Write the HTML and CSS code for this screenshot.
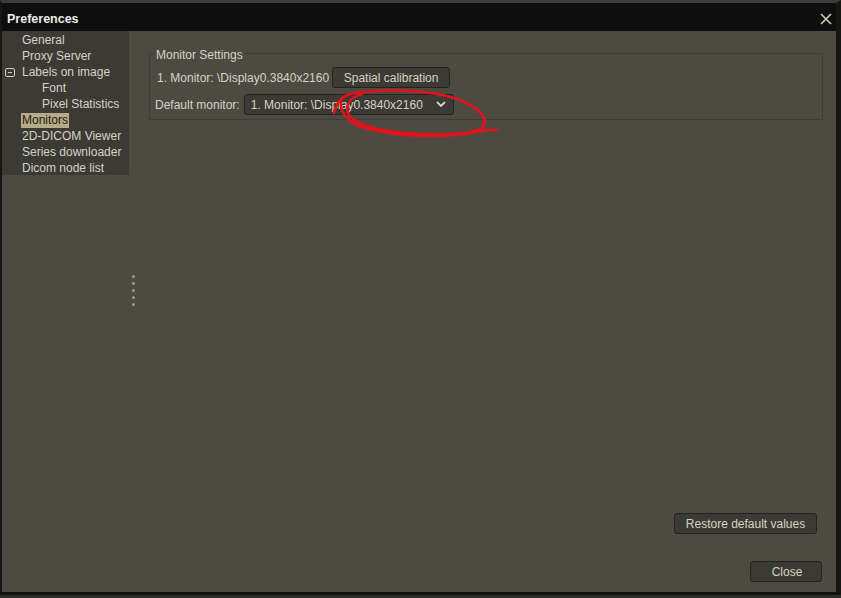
FILE: index.html
```html
<!DOCTYPE html>
<html lang="en">
<head>
    <meta charset="UTF-8">
    <title>Preferences</title>
    <link rel="stylesheet" href="styles.css">
</head>
<body>

    <div class="window">
        <div class="titlebar">
            <span class="title">Preferences</span>
            <svg class="close-x" width="12" height="12" viewBox="0 0 12 12">
                <path d="M1 1 L11 11 M11 1 L1 11" stroke="#cfcbbf" stroke-width="1.6" fill="none"/>
            </svg>
        </div>

        <div class="content">
            <div class="tree">
                <div class="item">General</div>
                <div class="item">Proxy Server</div>
                <div class="item"><span class="toggle"></span>Labels on image</div>
                <div class="item child">Font</div>
                <div class="item child">Pixel Statistics</div>
                <div class="item"><span class="selected">Monitors</span></div>
                <div class="item">2D-DICOM Viewer</div>
                <div class="item">Series downloader</div>
                <div class="item">Dicom node list</div>
            </div>

            <div class="splitter">
                <span></span><span></span><span></span><span></span><span></span>
            </div>

            <div class="main">
                <fieldset class="group">
                    <legend>Monitor Settings</legend>
                    <div class="row first">
                        <span>1. Monitor: \Display0.3840x2160</span>
                        <button class="btn calib">Spatial calibration</button>
                    </div>
                    <div class="row">
                        <span>Default monitor:</span>
                        <div class="combo">
                            <span>1. Monitor: \Display0.3840x2160</span>
                            <svg width="10" height="7" viewBox="0 0 10 7">
                                <path d="M1 1 L5 5 L9 1" stroke="#d8d4c6" stroke-width="1.8" fill="none"/>
                            </svg>
                        </div>
                    </div>
                </fieldset>

                <div class="restore-row">
                    <button class="btn">Restore default values</button>
                </div>
            </div>
        </div>

        <div class="footer">
            <button class="btn close-btn">Close</button>
        </div>

        <!-- red marker scribble -->
        <svg class="scribble" width="841" height="598" viewBox="0 0 841 598">
            <path d="M334 113 C336 104 340 97 350 94 C380 88 430 89 460 100 C480 108 490 120 482 128 C470 136 430 136 395 132 C370 129 352 122 348 113 C345 104 352 96 362 94"
                  stroke="#e0121c" stroke-width="2.8" fill="none" stroke-linecap="round"/>
            <path d="M342 98 C338 108 344 122 365 128 C400 138 450 138 475 132 C485 130 492 130 497 129"
                  stroke="#e0121c" stroke-width="2.6" fill="none" stroke-linecap="round"/>
        </svg>
    </div>

</body>
</html>
```

FILE: styles.css
```css
/* Reset */
* {
    margin: 0;
    padding: 0;
    box-sizing: border-box;
}

body {
    width: 841px;
    height: 598px;
    background-color: #2e2e2c;
    font-family: "Liberation Sans", Arial, sans-serif;
    font-size: 12px;
    color: #d6d2c3;
    overflow: hidden;
}

.window {
    position: relative;
    width: 841px;
    height: 595px;
    display: flex;
    flex-direction: column;
    background-color: #4d4a42;
    border-top: 3px solid #3d3d3b;
    border-left: 2px solid #161614;
    border-right: 5px solid #151513;
    border-bottom: 3px solid #121211;
}

.titlebar {
    height: 28px;
    background-color: #0e0e0e;
    display: flex;
    align-items: center;
    justify-content: space-between;
    padding: 3px 4px 0 5px;
}

.title {
    font-weight: bold;
    font-size: 12.5px;
    color: #ecebe6;
}

.close-x {
    margin-top: 1px;
}

.content {
    flex: 1;
    display: flex;
}

.tree {
    width: 127px;
    height: 144px;
    padding-top: 1px;
    background-color: #3c3a34;
}

.item {
    position: relative;
    height: 16px;
    line-height: 16px;
    padding-left: 20px;
    white-space: nowrap;
}

.item.child {
    padding-left: 40px;
}

.toggle {
    position: absolute;
    left: 3px;
    top: 4px;
    width: 10px;
    height: 9px;
    border: 1px solid #cfcbbd;
    border-radius: 2px;
}

.toggle::after {
    content: "";
    position: absolute;
    left: 2px;
    top: 3px;
    width: 4px;
    height: 1px;
    background-color: #cfcbbd;
}

.selected {
    display: inline-block;
    height: 15px;
    line-height: 15px;
    padding: 0 1px;
    margin-left: -1px;
    background-color: #b6ab86;
    color: #1d1c18;
}

.splitter {
    width: 8px;
    display: flex;
    flex-direction: column;
    align-items: center;
    gap: 4px;
    padding-top: 244px;
}

.splitter span {
    width: 3px;
    height: 3px;
    border-radius: 50%;
    background-color: #9d998d;
}

.main {
    flex: 1;
    display: flex;
    flex-direction: column;
    padding: 13px 13px 0 12px;
}

.group {
    border: 1px solid #3f3d37;
    padding: 5px 6px 4px 5px;
    display: flex;
    flex-direction: column;
    gap: 6px;
}

.group legend {
    padding: 4px 2px 0;
    margin-left: -1px;
    line-height: 14px;
}

.row {
    display: flex;
    align-items: center;
    gap: 3px;
    height: 21px;
}

.row.first {
    padding-left: 2px;
}

.btn {
    font-family: "Liberation Sans", Arial, sans-serif;
    font-size: 12px;
    color: #d6d2c3;
    background-color: #3c3a34;
    border: 1px solid #24231f;
    border-radius: 3px;
    height: 21px;
    padding: 0 8px;
}

.calib {
    width: 118px;
}

.combo {
    width: 210px;
    height: 21px;
    margin-left: 1px;
    display: flex;
    align-items: center;
    justify-content: space-between;
    padding: 0 7px 0 6px;
    background-color: #3c3a34;
    border: 1px solid #24231f;
    border-radius: 3px;
}

.restore-row {
    margin-top: auto;
    display: flex;
    justify-content: flex-end;
    padding-right: 6px;
    margin-bottom: 27px;
}

.restore-row .btn {
    width: 143px;
}

.footer {
    height: 31px;
    display: flex;
    justify-content: flex-end;
    padding: 0 14px 0 0;
}

.close-btn {
    width: 72px;
    height: 21px;
    padding-left: 10px;
}

.scribble {
    position: absolute;
    left: -2px;
    top: -3px;
    pointer-events: none;
}
```
